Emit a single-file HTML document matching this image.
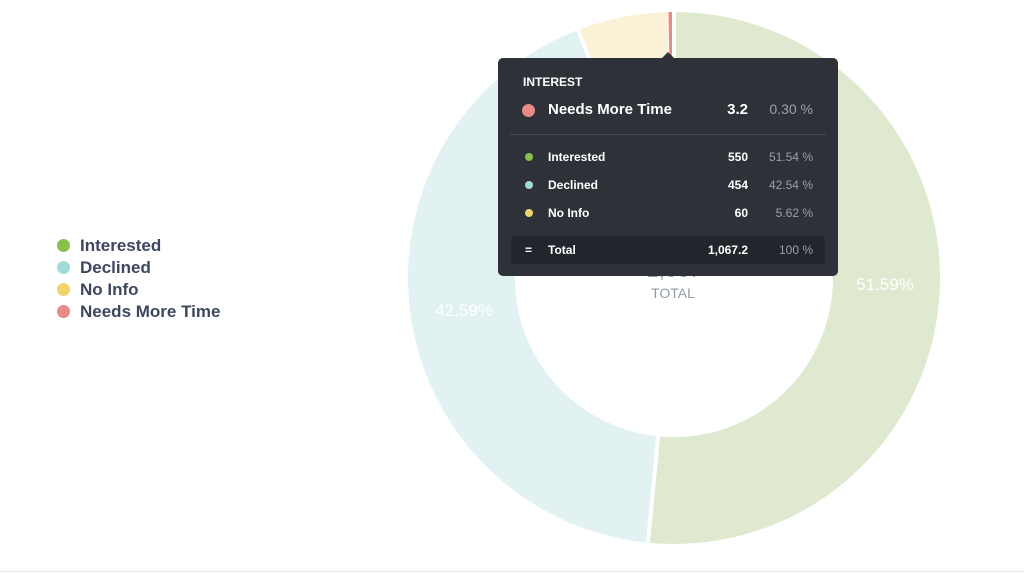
<!DOCTYPE html>
<html><head><style>
body{margin:0;width:1024px;height:574px;background:#fff;position:relative;overflow:hidden;font-family:"Liberation Sans",sans-serif}
.leg{position:absolute;left:57px;font-size:17px;color:#3f4660;font-weight:bold;line-height:22px}
.leg i{display:inline-block;width:13px;height:13px;border-radius:50%;margin-right:10px;vertical-align:-1px}
.tt{position:absolute;left:498px;top:58px;width:340px;height:218px;background:#2e3238;border-radius:5px;color:#fff}
.tt span{position:absolute}
</style></head><body>
<svg width="1024" height="574" style="position:absolute;left:0;top:0">
<g transform="rotate(-90 674 278)" fill="none" stroke-width="107">
<circle cx="674" cy="278" r="212.5" stroke="#dfe9d0" stroke-dasharray="688.8 2000"/>
<circle cx="674" cy="278" r="212.5" stroke="#e2f2f2" stroke-dasharray="0 688.8 568.5 2000"/>
<circle cx="674" cy="278" r="212.5" stroke="#fbf1d6" stroke-dasharray="0 1257.3 72 2000"/>
<circle cx="674" cy="278" r="212.5" stroke="#e88a85" stroke-dasharray="0 1330.3 3.6 2000"/>
</g>
<g stroke="#fff" stroke-width="4">
<line x1="674" y1="122" x2="674" y2="8"/>
<line x1="658.2" y1="436.2" x2="647.6" y2="546"/>
<line x1="617" y1="129.6" x2="575" y2="22"/>
</g>
<text x="674" y="277" fill="#949aab" font-size="22" text-anchor="middle" font-family="Liberation Sans">1,067</text>
<text x="885" y="290" fill="#fff" font-size="17" text-anchor="middle" font-family="Liberation Sans">51.59%</text>
<text x="464" y="316" fill="#fff" font-size="17" text-anchor="middle" font-family="Liberation Sans">42.59%</text>
<text x="673" y="298" fill="#949aab" font-size="14" text-anchor="middle" font-family="Liberation Sans">TOTAL</text>
<line x1="0" y1="571.5" x2="1024" y2="571.5" stroke="#e6e6e6"/>
</svg>
<div class="leg" style="top:235px"><i style="background:#88bf4d"></i>Interested</div>
<div class="leg" style="top:257px"><i style="background:#a2d9d9"></i>Declined</div>
<div class="leg" style="top:279px"><i style="background:#f2d36b"></i>No Info</div>
<div class="leg" style="top:301px"><i style="background:#e88a85"></i>Needs More Time</div>
<div class="tt">
<div style="position:absolute;left:164px;top:-6px;width:0;height:0;border-left:6px solid transparent;border-right:6px solid transparent;border-bottom:6px solid #2e3238"></div>
<span style="left:25px;top:17px;font-size:12px;font-weight:bold">INTEREST</span>
<span style="left:24px;top:46px;width:13px;height:13px;border-radius:50%;background:#e88a85"></span>
<span style="left:50px;top:43px;font-size:15px;font-weight:bold">Needs More Time</span>
<span style="right:90px;top:43px;font-size:15px;font-weight:bold">3.2</span>
<span style="right:25px;top:43px;font-size:14px;color:#9aa0aa">0.30 %</span>
<div style="position:absolute;left:12px;right:12px;top:76px;height:1px;background:#474b52"></div>
<span style="left:27px;top:95px;width:8px;height:8px;border-radius:50%;background:#88bf4d"></span>
<span style="left:50px;top:92px;font-size:12px;font-weight:bold">Interested</span>
<span style="right:90px;top:92px;font-size:12px;font-weight:bold">550</span>
<span style="right:25px;top:92px;font-size:12px;color:#9aa0aa">51.54 %</span>
<span style="left:27px;top:123px;width:8px;height:8px;border-radius:50%;background:#a2d9d9"></span>
<span style="left:50px;top:120px;font-size:12px;font-weight:bold">Declined</span>
<span style="right:90px;top:120px;font-size:12px;font-weight:bold">454</span>
<span style="right:25px;top:120px;font-size:12px;color:#9aa0aa">42.54 %</span>
<span style="left:27px;top:151px;width:8px;height:8px;border-radius:50%;background:#f2d36b"></span>
<span style="left:50px;top:148px;font-size:12px;font-weight:bold">No Info</span>
<span style="right:90px;top:148px;font-size:12px;font-weight:bold">60</span>
<span style="right:25px;top:148px;font-size:12px;color:#9aa0aa">5.62 %</span>
<div style="position:absolute;left:13px;right:13px;top:178px;height:28px;background:#22252c;border-radius:3px"></div>
<span style="left:27px;top:185px;font-size:12px;font-weight:bold">=</span>
<span style="left:50px;top:185px;font-size:12px;font-weight:bold">Total</span>
<span style="right:90px;top:185px;font-size:12px;font-weight:bold">1,067.2</span>
<span style="right:25px;top:185px;font-size:12px;color:#9aa0aa">100 %</span>
</div>
</body></html>
